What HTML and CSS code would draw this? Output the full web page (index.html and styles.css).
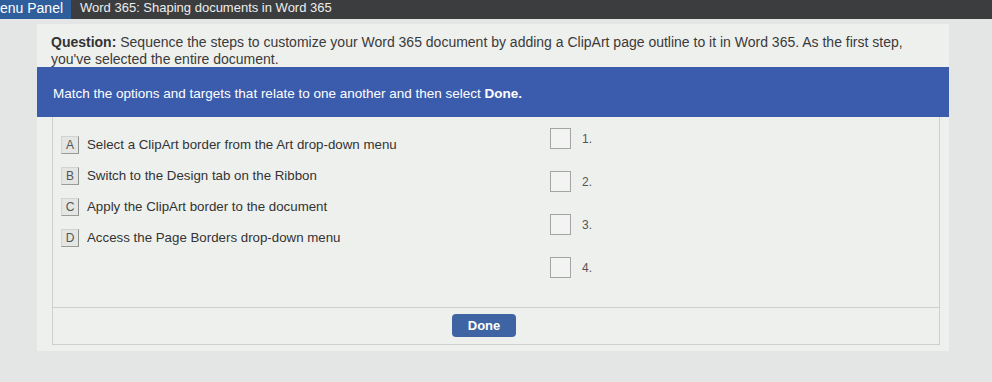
FILE: index.html
```html
<!DOCTYPE html>
<html lang="en">
<head>
<meta charset="utf-8">
<title>Word 365: Shaping documents in Word 365</title>
<link rel="stylesheet" href="styles.css">
</head>
<body>
<header class="topbar">
  <div class="tab">enu Panel</div>
  <div class="title">Word 365: Shaping documents in Word 365</div>
</header>
<main class="panel">
  <p class="question"><strong>Question:</strong> Sequence the steps to customize your Word 365 document by adding a ClipArt page outline to it in Word 365. As the first step, you've selected the entire document.</p>
  <div class="banner">Match the options and targets that relate to one another and then select <strong>Done.</strong></div>
  <section class="content">
    <div class="match">
      <ul class="options">
        <li class="option"><span class="key">A</span><span class="opt-text">Select a ClipArt border from the Art drop-down menu</span></li>
        <li class="option"><span class="key">B</span><span class="opt-text">Switch to the Design tab on the Ribbon</span></li>
        <li class="option"><span class="key">C</span><span class="opt-text">Apply the ClipArt border to the document</span></li>
        <li class="option"><span class="key">D</span><span class="opt-text">Access the Page Borders drop-down menu</span></li>
      </ul>
      <ol class="targets">
        <li class="target"><span class="slot"></span><span class="num">1.</span></li>
        <li class="target"><span class="slot"></span><span class="num">2.</span></li>
        <li class="target"><span class="slot"></span><span class="num">3.</span></li>
        <li class="target"><span class="slot"></span><span class="num">4.</span></li>
      </ol>
    </div>
    <div class="footer"><button class="done" type="button">Done</button></div>
  </section>
</main>
</body>
</html>
```
FILE: styles.css
```css
* { box-sizing: border-box; }
html, body { margin: 0; padding: 0; }
body {
  width: 992px;
  height: 382px;
  overflow: hidden;
  background: #e3e6e4;
  font-family: "Liberation Sans", Arial, sans-serif;
  color: #353535;
}
.topbar {
  height: 19px;
  background: #3b3d3e;
  display: flex;
  overflow: hidden;
}
.tab {
  width: 71px;
  background: #2f5e9c;
  color: #ffffff;
  font-size: 14px;
  line-height: 16px;
  white-space: nowrap;
}
.title {
  margin-left: 9px;
  color: #eeeeee;
  font-size: 13px;
  line-height: 15px;
  white-space: nowrap;
}
.panel {
  margin: 5px 0 0 37px;
  width: 912px;
  background: #eef0ee;
  padding-bottom: 6px;
}
.question {
  margin: 0;
  padding: 10px 24px 0 14px;
  font-size: 14px;
  line-height: 16.5px;
  color: #3a3a3a;
}
.question strong { color: #333; }
.banner {
  margin-top: 0;
  height: 50px;
  background: #3b5cad;
  color: #ffffff;
  font-size: 13.5px;
  line-height: 18px;
  padding: 18px 16px 0;
}
.content {
  margin: 0 9px 0 15px;
  border: 1px solid #cdd0ce;
  border-top: 0;
}
.match {
  height: 190px;
  display: grid;
  grid-template-columns: 497px 1fr;
}
.options {
  list-style: none;
  margin: 0;
  padding: 12px 0 0 8px;
}
.option {
  height: 31px;
  display: flex;
  align-items: center;
}
.key {
  width: 18px;
  height: 18px;
  display: flex;
  align-items: center;
  justify-content: center;
  background: #e4e6e4;
  border: 1px solid #d2d4d2;
  border-right-color: #8e908e;
  border-bottom-color: #9a9c9a;
  font-size: 12px;
  color: #555;
}
.opt-text {
  margin-left: 8px;
  font-size: 13.3px;
  color: #333;
}
.targets {
  list-style: none;
  margin: 0;
  padding: 0;
}
.target {
  height: 43px;
  display: flex;
  align-items: center;
}
.slot {
  width: 21px;
  height: 21px;
  border: 1px solid #a3a5a3;
  background: #f2f3f2;
}
.num {
  margin-left: 11px;
  font-size: 12px;
  color: #555;
}
.footer {
  height: 37px;
  border-top: 1px solid #cdd0ce;
  padding: 6px 0 0 399px;
}
.done {
  width: 64px;
  height: 23px;
  border: 0;
  border-radius: 4px;
  background: #3f64a3;
  color: #ffffff;
  font-family: "Liberation Sans", Arial, sans-serif;
  font-weight: bold;
  font-size: 13px;
  padding: 0;
}
```
